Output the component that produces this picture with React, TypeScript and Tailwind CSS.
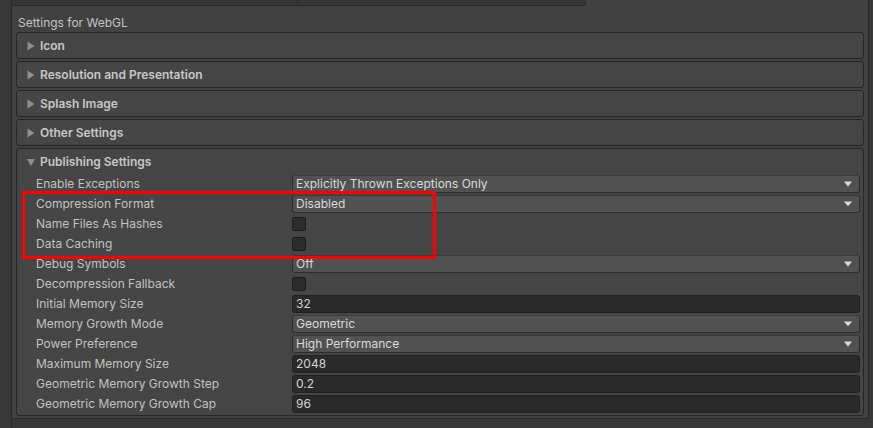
import React from 'react';

type Row =
  | { label: string; kind: 'dropdown'; value: string }
  | { label: string; kind: 'text'; value: string }
  | { label: string; kind: 'checkbox' };

const collapsed = ['Icon', 'Resolution and Presentation', 'Splash Image', 'Other Settings'];

const rows: Row[] = [
  { label: 'Enable Exceptions', kind: 'dropdown', value: 'Explicitly Thrown Exceptions Only' },
  { label: 'Compression Format', kind: 'dropdown', value: 'Disabled' },
  { label: 'Name Files As Hashes', kind: 'checkbox' },
  { label: 'Data Caching', kind: 'checkbox' },
  { label: 'Debug Symbols', kind: 'dropdown', value: 'Off' },
  { label: 'Decompression Fallback', kind: 'checkbox' },
  { label: 'Initial Memory Size', kind: 'text', value: '32' },
  { label: 'Memory Growth Mode', kind: 'dropdown', value: 'Geometric' },
  { label: 'Power Preference', kind: 'dropdown', value: 'High Performance' },
  { label: 'Maximum Memory Size', kind: 'text', value: '2048' },
  { label: 'Geometric Memory Growth Step', kind: 'text', value: '0.2' },
  { label: 'Geometric Memory Growth Cap', kind: 'text', value: '96' },
];

const Triangle: React.FC<{ open?: boolean }> = ({ open }) => (
  <svg width="8" height="10" viewBox="0 0 8 10" className="shrink-0">
    {open ? (
      <path d="M0 2 H8 L4 9 Z" fill="#8e8e8e" />
    ) : (
      <path d="M0.5 0.5 L7.5 5 L0.5 9.5 Z" fill="#8e8e8e" />
    )}
  </svg>
);

const Field: React.FC<{ row: Row }> = ({ row }) => {
  if (row.kind === 'checkbox') {
    return (
      <div className="w-[14px] h-[14px] rounded-[2px] bg-[#2c2c2c] border border-[#1c1c1c]" />
    );
  }
  if (row.kind === 'text') {
    return (
      <div className="flex-1 h-[18px] rounded-[3px] bg-[#2a2a2a] border border-[#202020] pl-[3px] leading-[16px] text-[#d2d2d2]">
        {row.value}
      </div>
    );
  }
  return (
    <div className="flex-1 h-[18px] rounded-[3px] bg-[#515151] border border-[#2e2e2e] border-t-[#3a3a3a] pl-[3px] pr-[7px] flex items-center justify-between text-[#dadada]">
      <span className="leading-[16px]">{row.value}</span>
      <svg width="8" height="6" viewBox="0 0 8 6">
        <path d="M0 0.5 H8 L4 5.5 Z" fill="#d8d8d8" />
      </svg>
    </div>
  );
};

export default function App() {
  return (
    <div
      className="relative w-[873px] h-[428px] overflow-hidden bg-[#383838] flex text-[12px] text-[#c4c4c4]"
      style={{ fontFamily: 'Inter, "Noto Sans", sans-serif' }}
    >
      {/* left strip */}
      <div className="w-[12px] shrink-0 border-r border-[#2a2a2a]" />

      <div className="w-[857px] h-[419px] shrink-0 bg-[#414141] border-r border-b border-[#2a2a2a] flex flex-col">
        {/* tab strip */}
        <div className="h-[6px] flex">
          <div className="w-[286px] bg-[#353535] border-b border-r border-[#2a2a2a]" />
          <div className="w-[288px] bg-[#353535] border-b border-r border-[#2a2a2a]" />
        </div>

        <div className="h-[26px] pl-[6px] pt-[9px] leading-[16px] text-[12px] text-[#c4c4c4]">Settings for WebGL</div>

        <div className="mx-[4px] flex flex-col gap-[2px]">
          {collapsed.map((title) => (
            <div
              key={title}
              className="h-[27px] rounded-[3px] bg-[#454545] border border-[#262626] pl-[10px] flex items-center gap-[5px]"
            >
              <Triangle />
              <span className="font-semibold text-[#c8c8c8]">{title}</span>
            </div>
          ))}

          <div className="rounded-[3px] bg-[#454545] border border-[#262626] pb-[1px]">
            <div className="h-[25px] pl-[10px] flex items-center gap-[5px]">
              <Triangle open />
              <span className="font-semibold text-[#c8c8c8]">Publishing Settings</span>
            </div>
            {rows.map((row) => (
              <div key={row.label} className="h-[20px] flex items-center pl-[19px] pr-[3px]">
                <div className="w-[256px] shrink-0 leading-[20px] text-[#c2c2c2]">{row.label}</div>
                <Field row={row} />
              </div>
            ))}
          </div>
        </div>
      </div>

      {/* highlight overlay */}
      <div className="absolute left-[22px] top-[191px] w-[414px] h-[68px] border-[3px] border-[#ff0000]" />
    </div>
  );
}
